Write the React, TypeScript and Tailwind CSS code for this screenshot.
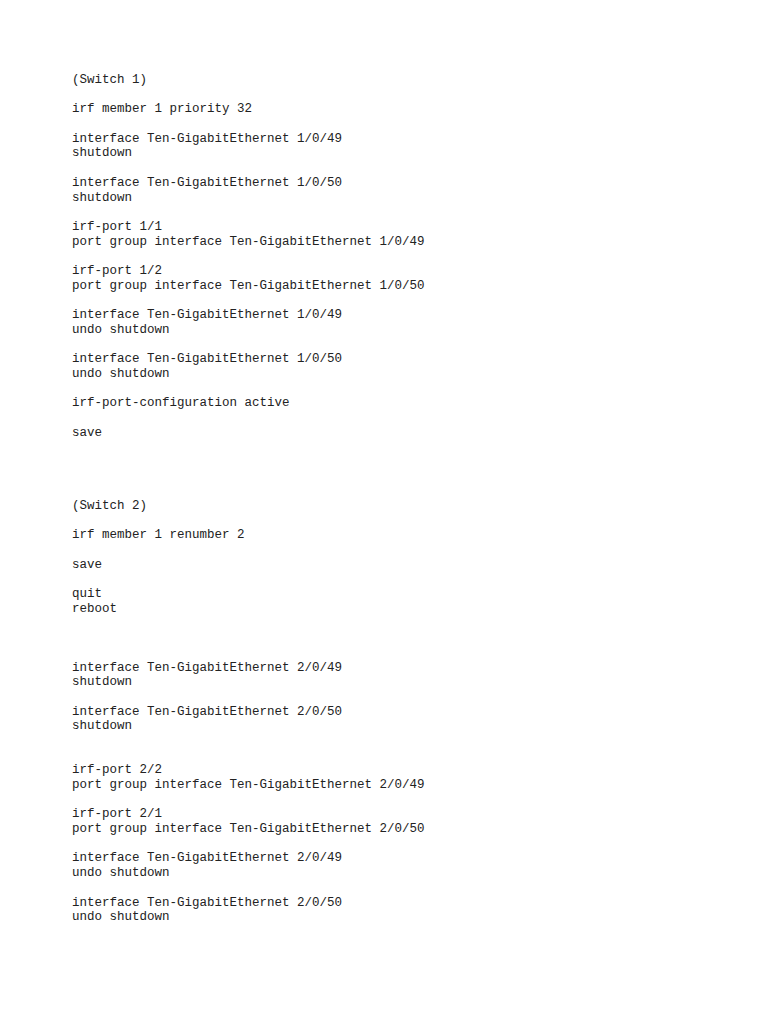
const lines = [
  "(Switch 1)",
  "",
  "irf member 1 priority 32",
  "",
  "interface Ten-GigabitEthernet 1/0/49",
  "shutdown",
  "",
  "interface Ten-GigabitEthernet 1/0/50",
  "shutdown",
  "",
  "irf-port 1/1",
  "port group interface Ten-GigabitEthernet 1/0/49",
  "",
  "irf-port 1/2",
  "port group interface Ten-GigabitEthernet 1/0/50",
  "",
  "interface Ten-GigabitEthernet 1/0/49",
  "undo shutdown",
  "",
  "interface Ten-GigabitEthernet 1/0/50",
  "undo shutdown",
  "",
  "irf-port-configuration active",
  "",
  "save",
  "",
  "",
  "",
  "",
  "(Switch 2)",
  "",
  "irf member 1 renumber 2",
  "",
  "save",
  "",
  "quit",
  "reboot",
  "",
  "",
  "",
  "interface Ten-GigabitEthernet 2/0/49",
  "shutdown",
  "",
  "interface Ten-GigabitEthernet 2/0/50",
  "shutdown",
  "",
  "",
  "irf-port 2/2",
  "port group interface Ten-GigabitEthernet 2/0/49",
  "",
  "irf-port 2/1",
  "port group interface Ten-GigabitEthernet 2/0/50",
  "",
  "interface Ten-GigabitEthernet 2/0/49",
  "undo shutdown",
  "",
  "interface Ten-GigabitEthernet 2/0/50",
  "undo shutdown",
];

export default function App() {
  return (
    <div className="w-[768px] h-[1024px] bg-white overflow-hidden">
      <div className="pt-[73px] pl-[72px] font-['Liberation_Mono',monospace] text-[12.5px] leading-[14.7px] text-[#222] whitespace-pre">
        {lines.map((l, i) => (
          <div key={i} className="h-[14.7px]">
            {l}
          </div>
        ))}
      </div>
    </div>
  );
}
